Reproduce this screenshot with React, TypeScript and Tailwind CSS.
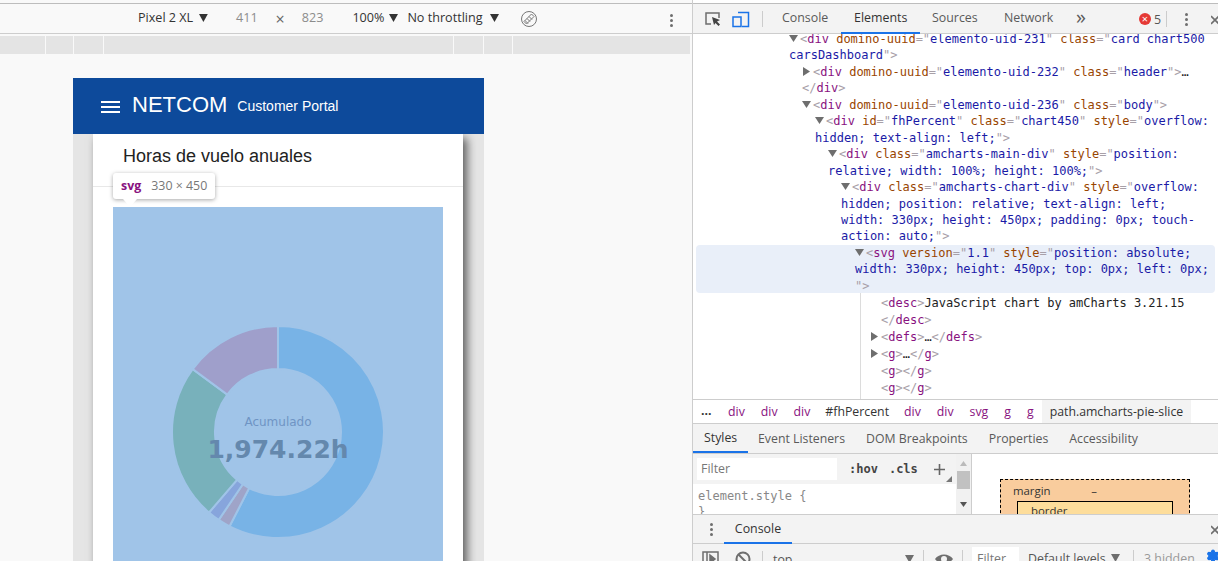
import React from 'react';
import { Settings } from 'lucide-react';

const ui = "font-['Open_Sans',sans-serif]";
const mono = "font-['DejaVu_Sans_Mono',monospace]";

const Tag = ({ children }: { children: React.ReactNode }) => <span className="text-[#881280]">{children}</span>;
const Attr = ({ children }: { children: React.ReactNode }) => <span className="text-[#994500]">{children}</span>;
const Val = ({ children }: { children: React.ReactNode }) => <span className="text-[#1a1aa6]">{children}</span>;
const Dim = ({ children }: { children: React.ReactNode }) => <span className="text-[#a8a0a8]">{children}</span>;

const Arrow = ({ open }: { open?: boolean }) => (
  <span className="inline-block w-[11px] h-[9px] align-[0px]">
    <svg width="9" height="9" viewBox="0 0 9 9">
      {open ? <path d="M0 1h9L4.5 8z" fill="#6e6e6e" /> : <path d="M1 0l7 4.5L1 9z" fill="#6e6e6e" />}
    </svg>
  </span>
);

const Row = ({ indent, children }: { indent: string; children: React.ReactNode }) => (
  <div className={`${indent} pr-1 break-words`}>{children}</div>
);

function DomTree() {
  return (
    <div className={`relative h-[365px] overflow-hidden bg-white ${mono} text-[12px] leading-[16.45px] text-[#222]`}>
      <div className="absolute left-[167px] top-[259px] bottom-0 w-px bg-[#dcdcdc]" />
      <div className="-mt-[3px]">
        <Row indent="pl-[96px]">
          <Arrow open /><Dim>&lt;</Dim><Tag>div</Tag> <Attr>domino-uuid</Attr><Dim>="</Dim><Val>elemento-uid-231</Val><Dim>"</Dim> <Attr>class</Attr><Dim>="</Dim><Val>card chart500 carsDashboard</Val><Dim>"&gt;</Dim>
        </Row>
        <Row indent="pl-[109px]">
          <Arrow /><Dim>&lt;</Dim><Tag>div</Tag> <Attr>domino-uuid</Attr><Dim>="</Dim><Val>elemento-uid-232</Val><Dim>"</Dim> <Attr>class</Attr><Dim>="</Dim><Val>header</Val><Dim>"&gt;</Dim>…<Dim>&lt;/</Dim><Tag>div</Tag><Dim>&gt;</Dim>
        </Row>
        <Row indent="pl-[109px]">
          <Arrow open /><Dim>&lt;</Dim><Tag>div</Tag> <Attr>domino-uuid</Attr><Dim>="</Dim><Val>elemento-uid-236</Val><Dim>"</Dim> <Attr>class</Attr><Dim>="</Dim><Val>body</Val><Dim>"&gt;</Dim>
        </Row>
        <Row indent="pl-[122px]">
          <Arrow open /><Dim>&lt;</Dim><Tag>div</Tag> <Attr>id</Attr><Dim>="</Dim><Val>fhPercent</Val><Dim>"</Dim> <Attr>class</Attr><Dim>="</Dim><Val>chart450</Val><Dim>"</Dim> <Attr>style</Attr><Dim>="</Dim><Val>overflow: hidden; text-align: left;</Val><Dim>"&gt;</Dim>
        </Row>
        <Row indent="pl-[135px]">
          <Arrow open /><Dim>&lt;</Dim><Tag>div</Tag> <Attr>class</Attr><Dim>="</Dim><Val>amcharts-main-div</Val><Dim>"</Dim> <Attr>style</Attr><Dim>="</Dim><Val>position: relative; width: 100%; height: 100%;</Val><Dim>"&gt;</Dim>
        </Row>
        <Row indent="pl-[148px]">
          <Arrow open /><Dim>&lt;</Dim><Tag>div</Tag> <Attr>class</Attr><Dim>="</Dim><Val>amcharts-chart-div</Val><Dim>"</Dim> <Attr>style</Attr><Dim>="</Dim><Val>overflow: hidden; position: relative; text-align: left; width: 330px; height: 450px; padding: 0px; touch-action: auto;</Val><Dim>"&gt;</Dim>
        </Row>
        <div className="mx-[3px] h-[48px] rounded-[4px] bg-[#e9eff9] pl-[159px] pr-[2px]">
          <Arrow open /><Dim>&lt;</Dim><Tag>svg</Tag> <Attr>version</Attr><Dim>="</Dim><Val>1.1</Val><Dim>"</Dim> <Attr>style</Attr><Dim>="</Dim><Val>position: absolute; width: 330px; height: 450px; top: 0px; left: 0px; </Val><Dim>"&gt;</Dim>
        </div>
        <div className="mt-[2.3px] leading-[16.9px]">
          <div className="pl-[188px]"><Dim>&lt;</Dim><Tag>desc</Tag><Dim>&gt;</Dim>JavaScript chart by amCharts 3.21.15</div>
          <div className="pl-[188px]"><Dim>&lt;/</Dim><Tag>desc</Tag><Dim>&gt;</Dim></div>
          <div className="pl-[177px]"><Arrow /><Dim>&lt;</Dim><Tag>defs</Tag><Dim>&gt;</Dim>…<Dim>&lt;/</Dim><Tag>defs</Tag><Dim>&gt;</Dim></div>
          <div className="pl-[177px]"><Arrow /><Dim>&lt;</Dim><Tag>g</Tag><Dim>&gt;</Dim>…<Dim>&lt;/</Dim><Tag>g</Tag><Dim>&gt;</Dim></div>
          <div className="pl-[188px]"><Dim>&lt;</Dim><Tag>g</Tag><Dim>&gt;&lt;/</Dim><Tag>g</Tag><Dim>&gt;</Dim></div>
          <div className="pl-[188px]"><Dim>&lt;</Dim><Tag>g</Tag><Dim>&gt;&lt;/</Dim><Tag>g</Tag><Dim>&gt;</Dim></div>
        </div>
      </div>
    </div>
  );
}

// donut slices, angles are clockwise from 12 o'clock
const slices = [
  { from: 0, to: 207.2, color: '#78b3e6' },
  { from: 207.2, to: 214, color: '#9fa4c8' },
  { from: 214, to: 220.6, color: '#87a5dc' },
  { from: 220.6, to: 306.4, color: '#78b1bb' },
  { from: 306.4, to: 360, color: '#9f9fcb' },
];

const pt = (r: number, a: number) => {
  const t = (a * Math.PI) / 180;
  return `${(165 + r * Math.sin(t)).toFixed(2)} ${(225 - r * Math.cos(t)).toFixed(2)}`;
};

const slicePath = (from: number, to: number) => {
  const R = 106;
  const r = 63;
  const large = to - from > 180 ? 1 : 0;
  return `M${pt(R, from)}A${R} ${R} 0 ${large} 1 ${pt(R, to)}L${pt(r, to)}A${r} ${r} 0 ${large} 0 ${pt(r, from)}Z`;
};

function Donut() {
  return (
    <svg width="330" height="450" className="block">
      <rect width="330" height="450" fill="#a0c4e8" />
      {slices.map((s) => (
        <path key={s.from} d={slicePath(s.from, s.to)} fill={s.color} stroke="#a0c4e8" strokeWidth="2" />
      ))}
      <text x="165" y="219" textAnchor="middle" fontFamily="DejaVu Sans" fontSize="12" fill="#6f94c4">Acumulado</text>
      <text x="165" y="251" textAnchor="middle" fontFamily="DejaVu Sans" fontWeight="700" fontSize="25" fill="#6488ad">1,974.22h</text>
    </svg>
  );
}

const Caret = () => (
  <svg width="9" height="8" viewBox="0 0 9 8"><path d="M0 0h9L4.5 8z" fill="#333" /></svg>
);

const Dots = ({ className = '' }: { className?: string }) => (
  <span className={`flex flex-col gap-[2px] ${className}`}>
    <i className="block w-[3px] h-[3px] rounded-full bg-[#6e6e6e]" />
    <i className="block w-[3px] h-[3px] rounded-full bg-[#6e6e6e]" />
    <i className="block w-[3px] h-[3px] rounded-full bg-[#6e6e6e]" />
  </span>
);

function DeviceBar() {
  return (
    <div className={`h-[30px] border-b border-[#cdcdcd] bg-[#f9f9f9] relative flex items-center text-[12.6px] text-[#333] ${ui}`}>
      <span className="ml-[138px] flex items-center gap-[6px] w-[70px] whitespace-nowrap">Pixel 2 XL <Caret /></span>
      <span className="ml-[28px] text-[#8c8c8c]">411</span>
      <span className="ml-[18px] text-[#666] text-[16px] leading-none">×</span>
      <span className="ml-[17px] text-[#8c8c8c]">823</span>
      <span className="ml-[29px] flex items-center gap-[5px]">100% <Caret /></span>
      <span className="ml-[9px] flex items-center gap-[7px]">No throttling <Caret /></span>
      <svg className="ml-[21px]" width="18" height="18" viewBox="0 0 18 18" fill="none" stroke="#777" strokeWidth="1">
        <circle cx="9" cy="9" r="7.5" />
        <path d="M4 11.5L11.5 4l2.5 2.5L6.5 14zM5 10.5l3 3M7 8.5l3 3M9 6.5l3 3" />
      </svg>
      <Dots className="absolute left-[670px] top-[10px]" />
    </div>
  );
}

function MediaBar() {
  return (
    <div className="mt-[2px] h-[18px] flex w-[690px] gap-[1px] [&>i]:bg-[#e4e4e4] [&>i]:block">
      <i className="w-[45px]" />
      <i className="w-[27px]" />
      <i className="w-[29px]" />
      <i className="w-[349px] flex-none" />
      <i className="w-[29px]" />
      <i className="w-[28px]" />
      <i className="flex-1" />
    </div>
  );
}

function Device() {
  return (
    <div className="flex-1 min-h-0 bg-[#f9f9f9] pt-[24px] pl-[73px] overflow-hidden">
      <div className="w-[411px] h-[600px] bg-[#e5e5e5] relative">
        <header className="h-[56px] bg-[#0d4a9b] flex items-center pl-[28px] text-white font-['Liberation_Sans',sans-serif] relative z-10">
          <span className="flex flex-col gap-[3px] mr-[12px] mt-[1px]">
            <i className="block w-[19px] h-[2px] bg-white" />
            <i className="block w-[19px] h-[2px] bg-white" />
            <i className="block w-[19px] h-[2px] bg-white" />
          </span>
          <span className="text-[22px] leading-none mb-[3px]">NETCOM</span>
          <span className="text-[14px] ml-[10px] mt-[1px]">Customer Portal</span>
        </header>
        <div className="ml-[20px] w-[370px] h-[500px] bg-white shadow-[4px_4px_9px_rgba(0,0,0,0.6)] font-['Liberation_Sans',sans-serif]">
          <div className="h-[53px] border-b border-[#e8e8e8] pl-[30px] pt-[11px] text-[18px] leading-[22px] text-[#222]">Horas de vuelo anuales</div>
          <div className="pl-[20px] pt-[20px]"><Donut /></div>
        </div>
        {/* inspect tooltip */}
        <div className={`absolute left-[40px] top-[95px] h-[26px] w-[102px] rounded-[3px] bg-white shadow-[0_1px_4px_rgba(0,0,0,0.35)] flex items-center pl-[8px] text-[12.4px] ${ui}`}>
          <b className="text-[#881280]">svg</b>
          <span className="ml-[10px] text-[#777]">330 × 450</span>
          <span className="absolute left-[10px] top-[26px] w-0 h-0 border-x-[7px] border-x-transparent border-t-[8px] border-t-white" />
        </div>
      </div>
    </div>
  );
}

function TopTabs() {
  return (
    <div className={`h-[30px] border-b border-[#cdcdcd] bg-[#f3f3f3] flex items-center text-[12.4px] text-[#5a5a5a] relative ${ui}`}>
      <svg className="ml-[11px]" width="18" height="18" viewBox="0 0 18 18" fill="none">
        <path d="M7 14H2V3h13v5" stroke="#6e6e6e" strokeWidth="1.5" />
        <path d="M8 7l8 3-3 1.5 3 3-1.5 1.5-3-3L10 15z" fill="#444" />
      </svg>
      <svg className="ml-[10px]" width="18" height="18" viewBox="0 0 18 18" fill="none" stroke="#1a73e8" strokeWidth="1.5">
        <path d="M6 2.5h10.5v14H10" />
        <rect x="1" y="7" width="8" height="9.5" />
      </svg>
      <i className="block ml-[12px] w-px h-[16px] bg-[#ccc]" />
      <span className="ml-[19px] w-[47px]">Console</span>
      <span className="ml-[12px] h-full flex items-center border-b-2 border-[#1a73e8] pl-[13px] text-[#333] relative top-[1px] w-[79px]">Elements</span>
      <span className="ml-[12px] w-[47px]">Sources</span>
      <span className="ml-[25px] w-[50px]">Network</span>
      <b className="ml-[22px] font-normal text-[20px] leading-none mb-[3px]">»</b>
      <span className="absolute left-[446px] top-[9px] w-[12px] h-[12px] rounded-full bg-[#e53935] text-white text-[11px] leading-[11px] text-center">×</span>
      <span className="absolute left-[461px] top-[7px] text-[#555]">5</span>
      <i className="absolute left-[473px] top-[7px] w-px h-[16px] bg-[#ccc]" />
      <Dots className="absolute left-[492px] top-[9px]" />
      <svg className="absolute left-[518px] top-[11px]" width="8" height="10" viewBox="0 0 8 10" stroke="#6e6e6e" strokeWidth="1.6"><path d="M0 1l8 8M8 1L0 9" /></svg>
    </div>
  );
}

function Crumbs() {
  return (
    <div className={`h-[25px] border-y border-[#cdcdcd] bg-white flex items-center text-[12.3px] pl-[8px] ${ui}`}>
      <span className="font-bold text-[#333] w-[27px]">...</span>
      <span className="flex gap-[16px] text-[#881280] pt-[1px]"><span>div</span><span>div</span><span>div</span></span>
      <span className="ml-[15px] text-[#333] pt-[1px]">#fhPercent</span>
      <span className="ml-[15px] flex gap-[16px] text-[#881280] pt-[1px]">
        <span>div</span><span>div</span><span>svg</span><span>g</span><span>g</span>
      </span>
      <span className="ml-[8px] h-full bg-[#f3f3f3] px-[8px] pt-[1px] flex items-center text-[#333]">path.amcharts-pie-slice</span>
    </div>
  );
}

function StylesPane() {
  return (
    <div className="h-[90px] flex-none">
      <div className={`h-[30px] bg-[#f3f3f3] border-b border-[#cdcdcd] flex items-center text-[12.3px] text-[#5a5a5a] pt-[1px] ${ui}`}>
        <span className="h-full flex items-center border-b-2 border-[#1a73e8] pl-[11px] w-[55px] text-[#333]">Styles</span>
        <span className="ml-[10px]">Event Listeners</span>
        <span className="ml-[21px]">DOM Breakpoints</span>
        <span className="ml-[21px]">Properties</span>
        <span className="ml-[21px]">Accessibility</span>
      </div>
      <div className="h-[60px] flex overflow-hidden">
        <div className="w-[279px] flex-none border-r border-[#cdcdcd] relative overflow-hidden bg-white">
          <div className="h-[30px] bg-[#f3f3f3] flex items-center pl-[4px] relative">
            <span className={`w-[140px] h-[22px] bg-white pl-[4px] flex items-center text-[12.4px] text-[#777] ${ui}`}>Filter</span>
            <span className={`ml-[12px] font-bold text-[#444] text-[12px] ${mono}`}>:hov</span>
            <span className={`ml-[11px] font-bold text-[#444] text-[12px] ${mono}`}>.cls</span>
            <svg className="ml-[15px]" width="13" height="13" viewBox="0 0 13 13"><path d="M6.5 1v11M1 6.5h11" stroke="#666" strokeWidth="1.6" /></svg>
            <svg className="absolute left-[253px] top-[22px]" width="6" height="6" viewBox="0 0 6 6"><path d="M6 0v6H0z" fill="#777" /></svg>
          </div>
          <div className={`pl-[5px] pt-[4px] ${mono} text-[12px] leading-[16px] text-[#888]`}>
            element.style {'{'}<br />{'}'}
          </div>
          <div className="absolute right-0 top-0 bottom-0 w-[15px] bg-[#f1f1f1] flex flex-col items-center pt-[7px]">
            <svg width="7" height="5" viewBox="0 0 7 5"><path d="M0 5l3.5-5L7 5z" fill="#bbb" /></svg>
            <i className="block w-[13px] h-[18px] bg-[#c1c1c1] mt-[5px]" />
            <svg className="mt-[13px]" width="7" height="5" viewBox="0 0 7 5"><path d="M0 0h7L3.5 5z" fill="#555" /></svg>
          </div>
        </div>
        <div className={`flex-1 bg-white pl-[28px] pt-[25px] text-[11.4px] text-[#333] ${ui}`}>
          <div className="w-[190px] h-[60px] bg-[#f9cc9d] border border-dashed border-black pl-[12px] pt-[3px] relative">
            <div className="flex w-[84px] justify-between leading-[16px]"><span>margin</span><span>–</span></div>
            <div className="absolute left-[16px] top-[21px] w-[156px] h-[40px] bg-[#fddd9b] border border-black pl-[13px] leading-[18px]">border</div>
          </div>
        </div>
      </div>
    </div>
  );
}

function ConsoleDrawer() {
  return (
    <div className={`flex-1 min-h-0 overflow-hidden border-t border-[#cdcdcd] ${ui} text-[12.4px]`}>
      <div className="h-[29px] bg-[#f3f3f3] border-b border-[#cdcdcd] flex items-center relative">
        <Dots className="ml-[17px]" />
        <span className="ml-[11px] w-[68px] h-full flex items-center justify-center border-b-2 border-[#1a73e8] text-[#333] relative top-[1px] pt-[1px]">Console</span>
        <svg className="absolute left-[518px] top-[10px]" width="8" height="10" viewBox="0 0 8 10" stroke="#6e6e6e" strokeWidth="1.6"><path d="M0 1l8 8M8 1L0 9" /></svg>
      </div>
      <div className="h-[30px] bg-[#f3f3f3] flex items-start pt-[7px] text-[#555] relative overflow-hidden">
        <svg className="ml-[9px]" width="17" height="16" viewBox="0 0 17 16" fill="none" stroke="#6e6e6e" strokeWidth="1.5">
          <rect x="1" y="1" width="15" height="14" /><path d="M5 1v14" /><path d="M8 4l5 4-5 4z" fill="#6e6e6e" />
        </svg>
        <svg className="ml-[16px]" width="16" height="16" viewBox="0 0 16 16" fill="none" stroke="#6e6e6e" strokeWidth="2">
          <circle cx="8" cy="8" r="6.5" /><path d="M3.5 3.5l9 9" />
        </svg>
        <i className="ml-[11px] w-px h-[16px] bg-[#ccc]" />
        <span className="ml-[10px]">top</span>
        <svg className="absolute left-[212px] top-[11px]" width="9" height="8" viewBox="0 0 9 8"><path d="M0 0h9L4.5 8z" fill="#6e6e6e" /></svg>
        <i className="absolute left-[230px] top-[6px] w-px h-[16px] bg-[#ccc]" />
        <svg className="absolute left-[241px] top-[8px]" width="20" height="14" viewBox="0 0 20 14"><path d="M1 7c4-6 14-6 18 0-4 6-14 6-18 0z" fill="#6e6e6e" /><circle cx="10" cy="7" r="3" fill="#f3f3f3" /></svg>
        <i className="absolute left-[269px] top-[6px] w-px h-[16px] bg-[#ccc]" />
        <span className="absolute left-[279px] top-[3px] w-[47px] h-[22px] bg-white pl-[5px] pt-[3px] text-[#777]">Filter</span>
        <span className="absolute left-[335px] top-[6px]">Default levels</span>
        <svg className="absolute left-[418px] top-[10px]" width="9" height="8" viewBox="0 0 9 8"><path d="M0 0h9L4.5 8z" fill="#6e6e6e" /></svg>
        <i className="absolute left-[440px] top-[6px] w-px h-[16px] bg-[#ccc]" />
        <span className="absolute left-[451px] top-[6px] text-[#999]">3 hidden</span>
        <Settings className="absolute left-[513px] top-[5px]" size={14} fill="#1a73e8" stroke="#1a73e8" />
      </div>
    </div>
  );
}

export default function App() {
  return (
    <div className="w-[1218px] h-[561px] flex overflow-hidden bg-white">
      <div className="w-[692px] flex-none flex flex-col pt-[3px] bg-[#f9f9f9]">
        <div className="border-t border-[#bdbdbd]">
          <DeviceBar />
        </div>
        <MediaBar />
        <Device />
      </div>
      <div className="flex-1 flex flex-col pt-[3px] border-l border-[#cdcdcd] min-w-0">
        <div className="border-t border-[#bdbdbd]">
          <TopTabs />
        </div>
        <DomTree />
        <Crumbs />
        <StylesPane />
        <ConsoleDrawer />
      </div>
    </div>
  );
}
